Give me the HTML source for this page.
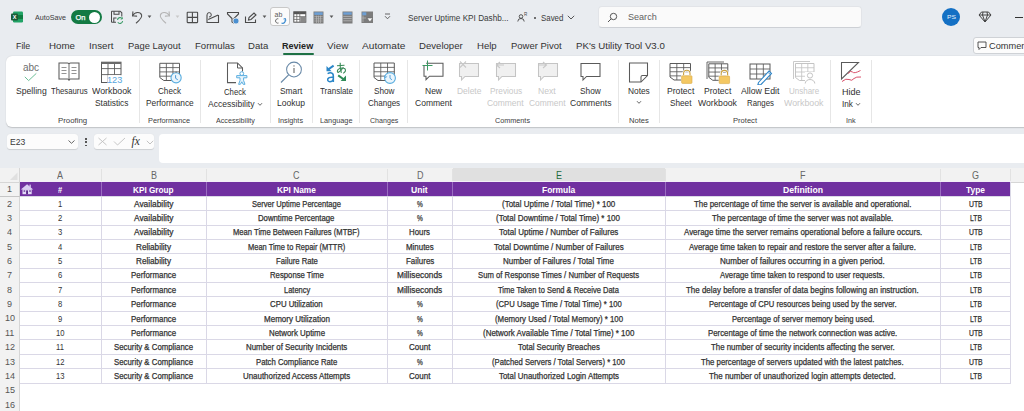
<!DOCTYPE html><html><head><meta charset="utf-8"><style>
*{box-sizing:border-box;margin:0;padding:0}
html,body{width:1024px;height:411px;overflow:hidden}
body{position:relative;background:#e9ecf0;font-family:"Liberation Sans",sans-serif;color:#242424}
.a{position:absolute;white-space:nowrap}
.t{position:absolute;white-space:nowrap;line-height:1}
.s{-webkit-text-stroke:0.25px currentColor}
.rl{position:absolute;white-space:nowrap;line-height:1;font-size:8.6px;color:#303030;text-align:center}
.gl{position:absolute;white-space:nowrap;line-height:1;font-size:8px;color:#3a3a3a;text-align:center}
.sep{position:absolute;top:60px;width:1px;height:63px;background:#e6e6e6}
.dis{color:#c2c2c2}
.cell{position:absolute;white-space:nowrap;line-height:1;font-size:8px;color:#2a2a2a;text-align:center}
.hd{position:absolute;white-space:nowrap;line-height:1;font-size:8.3px;color:#fff;font-weight:bold;text-align:center}
</style></head><body>
<svg class="a" style="left:10px;top:10px" width="14" height="14" viewBox="0 0 14 14">
<rect x="3" y="1.5" width="10" height="11" rx="1.2" fill="#21a366"/>
<rect x="3" y="5" width="10" height="4" fill="#107c41"/>
<rect x="1" y="3.5" width="7" height="7" rx="1" fill="#185c37"/>
<text x="4.5" y="9.2" font-size="5.5" font-family="Liberation Sans" font-weight="bold" fill="#fff" text-anchor="middle">X</text></svg>
<div class="t" style="left:35.00px;top:13.60px;font-size:7.5px;color:#3b3b3b;transform:scaleX(0.953);transform-origin:0 0;">AutoSave</div>
<div class="a" style="left:71px;top:10.3px;width:30.5px;height:13.6px;border-radius:7px;background:#137a43"></div>
<div class="a" style="left:89px;top:11.6px;width:11px;height:11px;border-radius:50%;background:#fff"></div>
<div class="t s" style="left:75.50px;top:14.00px;font-size:7.5px;color:#ffffff;transform:scaleX(1.000);transform-origin:0 0;">On</div>
<svg class="a" style="left:110px;top:10px" width="14" height="14" viewBox="0 0 14 14" fill="none" stroke="#4a4a4a" stroke-width="1.05">
<path d="M1.5 1.2 H10.2 L11.8 2.8 V6.5 M6 12.2 H1.5 Z" /><path d="M1.5 1.2 V12.2"/><path d="M4 1.2 V4.2 H9 V1.2"/><path d="M3.8 12.2 V8 H6.5"/>
<path d="M7.5 10 a2.6 2.6 0 0 1 4.8 -1.2" stroke="#3d9c68" stroke-width="1.1"/><path d="M12.6 11 a2.6 2.6 0 0 1 -4.8 1.2" stroke="#3d9c68" stroke-width="1.1"/>
<path d="M12.3 7.2 V9 H10.6" stroke="#3d9c68" stroke-width="0.9"/></svg>
<svg class="a" style="left:130px;top:9.5px" width="14" height="14" viewBox="0 0 14 14" fill="none" stroke="#4f4f4f" stroke-width="1.1" stroke-linecap="round">
<path d="M2.6 5.8 C5 1.5 10.5 1.6 11.6 5 C12.4 7.8 9.5 10.3 6.3 13"/><path d="M2.9 1.8 L2.6 5.8 L6.6 6.1"/></svg>
<svg class="a" style="left:147px;top:15.3px" width="5" height="4" viewBox="0 0 5 4"><path d="M0.6 0.6 L2.5 3 L4.4 0.6 Z" fill="#555"/></svg>
<svg class="a" style="left:158px;top:9.5px" width="14" height="14" viewBox="0 0 14 14" fill="none" stroke="#b4b4b4" stroke-width="1.1" stroke-linecap="round">
<path d="M11.4 5.8 C9 1.5 3.5 1.6 2.4 5 C1.6 7.8 4.5 10.3 7.7 13"/><path d="M11.1 1.8 L11.4 5.8 L7.4 6.1"/></svg>
<svg class="a" style="left:175px;top:15.3px" width="5" height="4" viewBox="0 0 5 4"><path d="M0.6 0.6 L2.5 3 L4.4 0.6 Z" fill="#c8c8c8"/></svg>
<svg class="a" style="left:185.5px;top:10.5px" width="13" height="13" viewBox="0 0 13 13" fill="none" stroke="#4a4a4a" stroke-width="1.1">
<rect x="1.2" y="1.2" width="10.4" height="10.4" rx="0.5"/><path d="M6.4 1.2 V11.6 M1.2 6.4 H11.6"/></svg>
<svg class="a" style="left:205px;top:10.5px" width="15" height="13" viewBox="0 0 15 13" fill="none" stroke="#4a4a4a" stroke-width="1.1">
<path d="M2 4 V11.5 H13.5 V4"/><path d="M3.2 8.5 L13.2 4"/><path d="M2 4 Q2 1.6 4.2 1.6 Q6.3 1.6 6.3 4 Q6.3 6 4 6" stroke-width="1"/></svg>
<svg class="a" style="left:225.5px;top:10.5px" width="14" height="14" viewBox="0 0 14 14" fill="none" stroke="#4a4a4a" stroke-width="1.1">
<path d="M1.5 1.5 H12.5 V3 L8 7.5 V12 L6 11 V7.5 L1.5 3 Z"/><circle cx="10" cy="10" r="3" fill="#4a8fd0" stroke="#e9ecf0" stroke-width="0.8"/></svg>
<svg class="a" style="left:244px;top:10.5px" width="14" height="13" viewBox="0 0 14 13" fill="none" stroke="#4a4a4a" stroke-width="1.1">
<path d="M1.5 5.5 V11.5 H11.5 V8.5"/><path d="M4.5 9 L5 6.5 L10 2 L12 4 L7 8.5 Z"/></svg>
<svg class="a" style="left:262px;top:15.3px" width="5" height="4" viewBox="0 0 5 4"><path d="M0.6 0.6 L2.5 3 L4.4 0.6 Z" fill="#555"/></svg>
<div class="a" style="left:270px;top:7px;width:19.5px;height:19px;border-radius:3px;background:#fbfbfb;border:1px solid #c8c8c8"></div>
<svg class="a" style="left:273px;top:9.5px" width="14" height="15" viewBox="0 0 14 15">
<text x="1.5" y="6.8" font-size="7" font-family="Liberation Sans" fill="#5a5a5a">ab</text>
<path d="M5.3 8.8 a2.2 2.2 0 1 0 0.2 4.2" fill="none" stroke="#5a5a5a" stroke-width="0.9"/>
<path d="M8.5 13 a2.6 2.6 0 0 0 3.5 -3.5" fill="none" stroke="#3a8ad0" stroke-width="1.2"/><path d="M10.5 9 L12.5 8.5 L12.8 10.8" fill="none" stroke="#3a8ad0" stroke-width="1"/></svg>
<svg class="a" style="left:293px;top:11px" width="14" height="12" viewBox="0 0 14 12">
<rect x="0.8" y="0.8" width="12" height="10.4" fill="#fff" stroke="#555" stroke-width="1"/><rect x="0.8" y="0.8" width="12" height="2.4" fill="#555"/>
<path d="M6.8 1 V11 M0.8 5.6 H12.8 M0.8 8.4 H6.8 M3.8 3 V11" stroke="#666" stroke-width="0.8"/><rect x="7.2" y="6" width="5.3" height="5" fill="#888"/></svg>
<svg class="a" style="left:312.5px;top:10.5px" width="11" height="13" viewBox="0 0 11 13">
<rect x="0.5" y="0.5" width="10" height="12" fill="#7c7c7c"/><rect x="1.3" y="1.3" width="8.4" height="2.6" fill="#6d9fd4"/>
<path d="M1.3 5.6 H9.7 M1.3 7.8 H9.7 M1.3 10 H9.7 M3.5 4.6 V12 M5.5 4.6 V12 M7.5 4.6 V12" stroke="#bdbdbd" stroke-width="0.6"/></svg>
<svg class="a" style="left:329px;top:15.3px" width="5" height="4" viewBox="0 0 5 4"><path d="M0.6 0.6 L2.5 3 L4.4 0.6 Z" fill="#555"/></svg>
<svg class="a" style="left:341.5px;top:10.5px" width="11" height="13" viewBox="0 0 11 13">
<rect x="0.5" y="0.5" width="10" height="12" fill="#7c7c7c"/><rect x="1.3" y="1.3" width="8.4" height="2.4" fill="#6d9fd4"/>
<path d="M1.3 5.4 H9.7 M1.3 7.6 H9.7 M1.3 9.8 H9.7" stroke="#c4c4c4" stroke-width="0.7"/></svg>
<svg class="a" style="left:360.5px;top:10.5px" width="13" height="13" viewBox="0 0 13 13">
<rect x="0.5" y="0.5" width="11.5" height="11.5" fill="#7c7c7c"/><rect x="1.3" y="1.3" width="4" height="3" fill="#6d9fd4"/>
<path d="M2 4.5 V11 M1.3 7 H5" stroke="#c4c4c4" stroke-width="0.6"/>
<path d="M6 7 L11.8 7 L8.9 11 Z" fill="#fff" stroke="#666" stroke-width="0.6"/></svg>
<svg class="a" style="left:383.5px;top:13px" width="7" height="7" viewBox="0 0 7 7" fill="none" stroke="#555" stroke-width="0.9">
<path d="M1 1 H6"/><path d="M1 3.2 L3.5 5.8 L6 3.2"/></svg>
<div class="t" style="left:407.80px;top:13.58px;font-size:8.5px;color:#3b3b3b;transform:scaleX(0.964);transform-origin:0 0;">Server Uptime KPI Dashb...</div>
<svg class="a" style="left:517px;top:12px" width="11" height="10" viewBox="0 0 11 10" fill="none" stroke="#444" stroke-width="0.9">
<circle cx="4" cy="4.5" r="1.8"/><path d="M0.8 9.5 a3.2 3 0 0 1 6.4 0"/><text x="7" y="4" font-size="4.5" font-family="Liberation Sans" fill="#444" stroke="none">R</text></svg>
<div class="a" style="left:533.8px;top:16.8px;width:2.2px;height:2.2px;border-radius:50%;background:#444"></div>
<div class="t" style="left:540.60px;top:13.58px;font-size:8.5px;color:#3b3b3b;transform:scaleX(0.929);transform-origin:0 0;">Saved</div>
<svg class="a" style="left:566.5px;top:15px" width="8" height="5" viewBox="0 0 8 5"><path d="M0.8 0.8 L4 4 L7.2 0.8" fill="none" stroke="#444" stroke-width="0.9"/></svg>
<div class="a" style="left:598.2px;top:6.4px;width:264px;height:22px;border-radius:4px;background:#fafafa;border:1px solid #e2e4e8;border-bottom-color:#cdd0d5"></div>
<svg class="a" style="left:607px;top:12px" width="11" height="11" viewBox="0 0 11 11" fill="none" stroke="#555" stroke-width="1">
<circle cx="6.5" cy="4.5" r="3.2"/><path d="M4.2 6.8 L1 10"/></svg>
<div class="t" style="left:627.70px;top:12.78px;font-size:8.5px;color:#616161;transform:scaleX(1.066);transform-origin:0 0;">Search</div>
<div class="a" style="left:942px;top:8px;width:18px;height:18px;border-radius:50%;background:#1470c4"></div>
<div class="t" style="left:946.50px;top:14.08px;font-size:6px;color:#e8f0fa;transform:scaleX(1.124);transform-origin:0 0;">PS</div>
<svg class="a" style="left:978px;top:10.5px" width="14" height="12" viewBox="0 0 14 12" fill="none" stroke="#444" stroke-width="1">
<path d="M3.5 1 H10.5 L13 4 L7 11 L1 4 Z M1 4 H13 M5 1 L4.5 4 L7 11 L9.5 4 L9 1"/></svg>
<div class="a" style="left:1015px;top:16.5px;width:8px;height:1px;background:#333"></div>
<div class="t" style="left:15.80px;top:41.06px;font-size:9.5px;color:#333333;transform:scaleX(0.928);transform-origin:0 0;">File</div>
<div class="t" style="left:48.60px;top:41.06px;font-size:9.5px;color:#333333;transform:scaleX(1.022);transform-origin:0 0;">Home</div>
<div class="t" style="left:88.60px;top:41.06px;font-size:9.5px;color:#333333;transform:scaleX(1.027);transform-origin:0 0;">Insert</div>
<div class="t" style="left:127.50px;top:41.06px;font-size:9.5px;color:#333333;transform:scaleX(0.984);transform-origin:0 0;">Page Layout</div>
<div class="t" style="left:194.50px;top:41.06px;font-size:9.5px;color:#333333;transform:scaleX(1.008);transform-origin:0 0;">Formulas</div>
<div class="t" style="left:248.40px;top:41.06px;font-size:9.5px;color:#333333;transform:scaleX(1.007);transform-origin:0 0;">Data</div>
<div class="t" style="left:282.40px;top:41.06px;font-size:9.5px;color:#242424;font-weight:bold;transform:scaleX(0.953);transform-origin:0 0;">Review</div>
<div class="t" style="left:327.00px;top:41.06px;font-size:9.5px;color:#333333;transform:scaleX(1.043);transform-origin:0 0;">View</div>
<div class="t" style="left:361.60px;top:41.06px;font-size:9.5px;color:#333333;transform:scaleX(1.067);transform-origin:0 0;">Automate</div>
<div class="t" style="left:418.60px;top:41.06px;font-size:9.5px;color:#333333;transform:scaleX(1.009);transform-origin:0 0;">Developer</div>
<div class="t" style="left:476.60px;top:41.06px;font-size:9.5px;color:#333333;transform:scaleX(1.008);transform-origin:0 0;">Help</div>
<div class="t" style="left:511.30px;top:41.06px;font-size:9.5px;color:#333333;transform:scaleX(0.998);transform-origin:0 0;">Power Pivot</div>
<div class="t" style="left:576.40px;top:41.06px;font-size:9.5px;color:#333333;transform:scaleX(1.019);transform-origin:0 0;">PK's Utility Tool V3.0</div>
<div class="a" style="left:282.5px;top:52.8px;width:31.5px;height:2px;border-radius:1px;background:#1e7145"></div>
<div class="a" style="left:972.7px;top:37px;width:60px;height:16.5px;border-radius:3px;background:#fcfcfc;border:1px solid #cfd2d6"></div>
<svg class="a" style="left:977px;top:40.5px" width="10" height="10" viewBox="0 0 10 10" fill="none" stroke="#444" stroke-width="0.9">
<path d="M1 1 H9 V6.5 H4 L2 8.5 V6.5 H1 Z"/></svg>
<div class="t" style="left:988.50px;top:40.56px;font-size:9.5px;color:#333333;transform:scaleX(0.973);transform-origin:0 0;">Commen</div>
<div class="a" style="left:6px;top:56.3px;width:1030px;height:70.7px;border-radius:6px;background:#ffffff;box-shadow:0 0.8px 1.2px rgba(0,0,0,0.18)"></div>
<div class="sep" style="left:138.5px"></div>
<div class="sep" style="left:199.8px"></div>
<div class="sep" style="left:269.5px"></div>
<div class="sep" style="left:311.8px"></div>
<div class="sep" style="left:359.3px"></div>
<div class="sep" style="left:407px"></div>
<div class="sep" style="left:617.8px"></div>
<div class="sep" style="left:659px"></div>
<div class="sep" style="left:829.7px"></div>
<div class="sep" style="left:870.5px"></div>
<svg class="a" style="left:20px;top:60px" width="22" height="24" viewBox="0 0 22 24" fill="none"><text x="11" y="11.2" font-size="10" font-family="Liberation Sans" fill="#6e6e6e" text-anchor="middle">abc</text><path d="M4.8 16.8 L8.6 20.6 L16.3 13.4" stroke="#6cbf97" stroke-width="1"/></svg>
<div class="t" style="left:15.60px;top:86.62px;font-size:9.0px;color:#303030;transform:scaleX(0.959);transform-origin:0 0;">Spelling</div>
<svg class="a" style="left:57px;top:61px" width="25" height="22" viewBox="0 0 25 22" fill="none"><path d="M2 2 H10.5 Q12 2 12 3.5 Q12 2 13.5 2 H22 V18 H13.5 Q12 18 12 19.5 Q12 18 10.5 18 H2 Z" stroke="#5a5a5a" stroke-width="1.05" fill="#fff"/><path d="M12 3.5 V19.5" stroke="#5a5a5a" stroke-width="0.9"/><path d="M4.5 6.5 H9.5 M4.5 9.5 H9.5 M4.5 12.5 H9.5 M14.5 6.5 H19.5 M14.5 9.5 H19.5 M14.5 12.5 H19.5" stroke="#888" stroke-width="0.9"/></svg>
<div class="t" style="left:51.00px;top:86.62px;font-size:9.0px;color:#303030;transform:scaleX(0.861);transform-origin:0 0;">Thesaurus</div>
<svg class="a" style="left:100px;top:60px" width="24" height="25" viewBox="0 0 24 25" fill="none"><rect x="1.5" y="2.2" width="19.5" height="20.3" fill="#fff" stroke="#5a5a5a" stroke-width="1"/><rect x="1.5" y="2" width="19.5" height="2" fill="#6a6a6a"/><path d="M1.5 8.6 H21 M1.5 14.6 H21 M8 4 V22.5 M14.5 4 V14.6" stroke="#5a5a5a" stroke-width="0.9"/><rect x="7.6" y="15.2" width="16" height="9.5" fill="#fff"/><text x="14.6" y="22.6" font-size="9.2" font-family="Liberation Sans" fill="#58a6dc" text-anchor="middle">123</text></svg>
<div class="t" style="left:91.90px;top:86.62px;font-size:9.0px;color:#303030;transform:scaleX(0.979);transform-origin:0 0;">Workbook</div>
<div class="t" style="left:95.00px;top:98.52px;font-size:9.0px;color:#303030;transform:scaleX(0.930);transform-origin:0 0;">Statistics</div>
<div class="t" style="left:58.40px;top:116.74px;font-size:8.0px;color:#404040;transform:scaleX(0.980);transform-origin:0 0;">Proofing</div>
<svg class="a" style="left:158px;top:61px" width="26" height="25" viewBox="0 0 26 25" fill="none"><path d="M1.8 2.3 H21.5 V19.5 H5.8 L1.8 16.5 Z" fill="#fff" stroke="#5a5a5a" stroke-width="1.0"/><path d="M8.37 2.3 V19.5" stroke="#5a5a5a" stroke-width="0.85"/><path d="M14.93 2.3 V19.5" stroke="#5a5a5a" stroke-width="0.85"/><path d="M1.8 6.60 H21.5" stroke="#5a5a5a" stroke-width="0.85"/><path d="M1.8 10.90 H21.5" stroke="#5a5a5a" stroke-width="0.85"/><path d="M1.8 15.20 H21.5" stroke="#5a5a5a" stroke-width="0.85"/><circle cx="18.1" cy="16.8" r="5.1" fill="#eaf5fc" stroke="#5aaee0" stroke-width="1.1"/><path d="M17.6 14.2 V17.3 L19.8 18.8" stroke="#4a9ad8" stroke-width="1"/><path d="M18.1 11.7 V10.6" stroke="#555" stroke-width="1"/></svg>
<div class="t" style="left:158.00px;top:86.62px;font-size:9.0px;color:#303030;transform:scaleX(0.902);transform-origin:0 0;">Check</div>
<div class="t" style="left:145.60px;top:98.52px;font-size:9.0px;color:#303030;transform:scaleX(0.926);transform-origin:0 0;">Performance</div>
<div class="t" style="left:148.00px;top:116.74px;font-size:8.0px;color:#404040;transform:scaleX(0.917);transform-origin:0 0;">Performance</div>
<svg class="a" style="left:225px;top:60.6px" width="26" height="25" viewBox="0 0 26 25" fill="none"><path d="M2.5 2 H12.5 L17.5 7 V21.6 H2.5 Z" fill="#fff" stroke="#5a5a5a" stroke-width="1.05"/><path d="M12.5 2 V7 H17.5" stroke="#5a5a5a" stroke-width="1"/><rect x="11" y="10.5" width="13" height="14" fill="#fff"/><circle cx="16.8" cy="12.6" r="1.9" fill="#fff" stroke="#5aaee0" stroke-width="1"/><path d="M11.7 14.6 H21.9 V16.8 H18.6 V19.6 L20 23.3 H18.2 L16.8 20.8 L15.4 23.3 H13.6 L15 19.6 V16.8 H11.7 Z" fill="#e8f4fb" stroke="#5aaee0" stroke-width="1"/></svg>
<div class="t" style="left:224.40px;top:88.42px;font-size:9.0px;color:#303030;transform:scaleX(0.862);transform-origin:0 0;">Check</div>
<div class="t" style="left:208.00px;top:99.92px;font-size:9.0px;color:#303030;transform:scaleX(0.949);transform-origin:0 0;">Accessibility</div>
<svg class="a" style="left:256.5px;top:101.5px" width="6" height="5" viewBox="0 0 6 5" fill="none"><path d="M1 1.2 L3 3.3 L5 1.2" stroke="#555" stroke-width="0.9"/></svg>
<div class="t" style="left:215.70px;top:116.74px;font-size:8.0px;color:#404040;transform:scaleX(0.893);transform-origin:0 0;">Accessibility</div>
<svg class="a" style="left:279px;top:60px" width="25" height="25" viewBox="0 0 25 25" fill="none"><circle cx="15" cy="9.5" r="7.4" stroke="#6a8aa8" stroke-width="1.05"/><path d="M9.6 14.8 L2 22.5" stroke="#6a8aa8" stroke-width="1.2"/><path d="M15 8 V13" stroke="#666" stroke-width="1.1"/><circle cx="15" cy="5.9" r="0.7" fill="#666"/></svg>
<div class="t" style="left:279.50px;top:86.62px;font-size:9.0px;color:#303030;transform:scaleX(0.929);transform-origin:0 0;">Smart</div>
<div class="t" style="left:277.00px;top:98.52px;font-size:9.0px;color:#303030;transform:scaleX(0.948);transform-origin:0 0;">Lookup</div>
<div class="t" style="left:278.00px;top:116.74px;font-size:8.0px;color:#404040;transform:scaleX(0.907);transform-origin:0 0;">Insights</div>
<svg class="a" style="left:324px;top:61px" width="25" height="22" viewBox="0 0 25 22" fill="none"><path d="M9.6 4.6 L4.5 8.3" stroke="#2a86c8" stroke-width="2"/><path d="M2.5 5 L2.5 10.2 L7.6 10.2 Z" fill="#2a86c8"/><path d="M3.6 12.6 Q6.5 11 8.6 12.6 Q9.3 13.3 9.3 15 V21" stroke="#2a86c8" stroke-width="1.6" fill="none"/><path d="M9.3 16.2 Q4.8 15.8 3.8 17.8 Q3.2 20.6 5.9 20.7 Q8.5 20.7 9.3 18.5" stroke="#2a86c8" stroke-width="1.5" fill="none"/><path d="M13 4.8 L20.5 4.2" stroke="#3a8a58" stroke-width="1.1"/><path d="M16.2 1.8 Q15.8 7 17.4 11.8" stroke="#3a8a58" stroke-width="1.1"/><path d="M19.5 6.2 Q16.5 10.5 14.2 11.5 Q12.5 10.5 14.2 8.4 Q17.5 6.2 20.8 7.6 Q22.8 10 19.2 12.4" stroke="#3a8a58" stroke-width="1.1" fill="none"/><path d="M14.2 14.4 L19.6 18.3" stroke="#2e8b57" stroke-width="2"/><path d="M22 14.5 L22 20 L16.6 20 Z" fill="#2e8b57"/></svg>
<div class="t" style="left:320.00px;top:86.62px;font-size:9.0px;color:#303030;transform:scaleX(0.888);transform-origin:0 0;">Translate</div>
<div class="t" style="left:320.00px;top:116.74px;font-size:8.0px;color:#404040;transform:scaleX(0.913);transform-origin:0 0;">Language</div>
<svg class="a" style="left:372px;top:61px" width="26" height="25" viewBox="0 0 26 25" fill="none"><path d="M2 2 H22.3 V19.5 H6 L2 16.5 Z" fill="#fff" stroke="#5a5a5a" stroke-width="1.0"/><path d="M8.77 2 V19.5" stroke="#5a5a5a" stroke-width="0.85"/><path d="M15.53 2 V19.5" stroke="#5a5a5a" stroke-width="0.85"/><path d="M2 6.38 H22.3" stroke="#5a5a5a" stroke-width="0.85"/><path d="M2 10.75 H22.3" stroke="#5a5a5a" stroke-width="0.85"/><path d="M2 15.12 H22.3" stroke="#5a5a5a" stroke-width="0.85"/><circle cx="18" cy="17" r="5.4" fill="#eaf5fc" stroke="#5aaee0" stroke-width="1.1"/><path d="M18 14 V17.3 L20 18.8" stroke="#4a9ad8" stroke-width="0.9"/><path d="M12.3 14.6 L13.3 16.6 L15.2 15.4" stroke="#4a9ad8" stroke-width="0.8"/></svg>
<div class="t" style="left:373.50px;top:86.62px;font-size:9.0px;color:#303030;transform:scaleX(0.911);transform-origin:0 0;">Show</div>
<div class="t" style="left:367.60px;top:98.52px;font-size:9.0px;color:#303030;transform:scaleX(0.891);transform-origin:0 0;">Changes</div>
<div class="t" style="left:369.60px;top:116.74px;font-size:8.0px;color:#404040;transform:scaleX(0.887);transform-origin:0 0;">Changes</div>
<svg class="a" style="left:421px;top:60px" width="24" height="23" viewBox="0 0 24 23" fill="none"><path d="M3 3.2 H22 V16.2 H8.5 L5 19.7 V16.2 H3 Z" fill="#fff" stroke="#5a5a5a" stroke-width="1.05"/><rect x="1.2" y="1.2" width="4" height="4" fill="#fff"/><path d="M6.5 0.5 V10.5 M1.5 5.5 H11.5" stroke="#3c9a64" stroke-width="1"/></svg>
<div class="t" style="left:425.00px;top:86.62px;font-size:9.0px;color:#303030;transform:scaleX(0.944);transform-origin:0 0;">New</div>
<div class="t" style="left:414.60px;top:98.52px;font-size:9.0px;color:#303030;transform:scaleX(0.948);transform-origin:0 0;">Comment</div>
<svg class="a" style="left:457px;top:61px" width="24" height="22" viewBox="0 0 24 22" fill="none"><path d="M2.5 2.5 H21.5 V15.5 H8.0 L4.5 19.0 V15.5 H2.5 Z" fill="#f0f0f0" stroke="#c4c4c4" stroke-width="1.05"/><path d="M3 0.5 L9 6.5 M9 0.5 L3 6.5" stroke="#c8c8c8" stroke-width="1.1"/></svg>
<div class="t" style="left:457.40px;top:86.62px;font-size:9.0px;color:#c8c8c8;transform:scaleX(0.938);transform-origin:0 0;">Delete</div>
<svg class="a" style="left:494px;top:61px" width="24" height="22" viewBox="0 0 24 22" fill="none"><path d="M2.5 2.5 H21.5 V15.5 H8.0 L4.5 19.0 V15.5 H2.5 Z" fill="#f0f0f0" stroke="#c4c4c4" stroke-width="1.05"/><path d="M6 1 L2.5 4 L6 7 M2.5 4 H10" stroke="#c8c8c8" stroke-width="1.1"/></svg>
<div class="t" style="left:489.50px;top:86.62px;font-size:9.0px;color:#c8c8c8;transform:scaleX(0.920);transform-origin:0 0;">Previous</div>
<div class="t" style="left:487.00px;top:98.52px;font-size:9.0px;color:#c8c8c8;transform:scaleX(0.938);transform-origin:0 0;">Comment</div>
<svg class="a" style="left:536px;top:61px" width="24" height="22" viewBox="0 0 24 22" fill="none"><path d="M2.5 2.5 H21.5 V15.5 H8.0 L4.5 19.0 V15.5 H2.5 Z" fill="#f0f0f0" stroke="#c4c4c4" stroke-width="1.05"/><path d="M7 1 L10.5 4 L7 7 M3 4 H10.5" stroke="#c8c8c8" stroke-width="1.1"/></svg>
<div class="t" style="left:538.00px;top:86.62px;font-size:9.0px;color:#c8c8c8;transform:scaleX(0.956);transform-origin:0 0;">Next</div>
<div class="t" style="left:528.50px;top:98.52px;font-size:9.0px;color:#c8c8c8;transform:scaleX(0.936);transform-origin:0 0;">Comment</div>
<svg class="a" style="left:579px;top:61px" width="24" height="22" viewBox="0 0 24 22" fill="none"><path d="M2 2.5 H21 V15.5 H7.5 L4 19.0 V15.5 H2 Z" fill="#fff" stroke="#5a5a5a" stroke-width="1.05"/></svg>
<div class="t" style="left:580.00px;top:86.62px;font-size:9.0px;color:#303030;transform:scaleX(0.924);transform-origin:0 0;">Show</div>
<div class="t" style="left:569.60px;top:98.52px;font-size:9.0px;color:#303030;transform:scaleX(0.952);transform-origin:0 0;">Comments</div>
<div class="t" style="left:495.00px;top:116.74px;font-size:8.0px;color:#404040;transform:scaleX(0.905);transform-origin:0 0;">Comments</div>
<svg class="a" style="left:627px;top:61px" width="24" height="23" viewBox="0 0 24 23" fill="none"><path d="M2.5 2 H20.5 V14.5 L14 21 H2.5 Z" fill="#fff" stroke="#5a5a5a" stroke-width="1.05"/><path d="M20.5 14.5 H15.5 Q14 14.5 14 16 V21" stroke="#5a5a5a" stroke-width="1.05"/></svg>
<div class="t" style="left:627.60px;top:86.62px;font-size:9.0px;color:#303030;transform:scaleX(0.927);transform-origin:0 0;">Notes</div>
<svg class="a" style="left:635.5px;top:99.5px" width="6" height="5" viewBox="0 0 6 5" fill="none"><path d="M1 1.2 L3 3.3 L5 1.2" stroke="#555" stroke-width="0.9"/></svg>
<div class="t" style="left:628.60px;top:116.74px;font-size:8.0px;color:#404040;transform:scaleX(0.952);transform-origin:0 0;">Notes</div>
<svg class="a" style="left:668px;top:61px" width="26" height="24" viewBox="0 0 26 24" fill="none"><path d="M2 2.5 H22.5 V19.0 H6 L2 16.0 Z" fill="#fff" stroke="#5a5a5a" stroke-width="1.0"/><path d="M8.83 2.5 V19.0" stroke="#5a5a5a" stroke-width="0.85"/><path d="M15.67 2.5 V19.0" stroke="#5a5a5a" stroke-width="0.85"/><path d="M2 6.62 H22.5" stroke="#5a5a5a" stroke-width="0.85"/><path d="M2 10.75 H22.5" stroke="#5a5a5a" stroke-width="0.85"/><path d="M2 14.88 H22.5" stroke="#5a5a5a" stroke-width="0.85"/><path d="M15.6 15 V12.4 a3.2 3.2 0 0 1 6.4 0 V15" stroke="#fff" stroke-width="2.6"/><path d="M15.6 15 V12.4 a3.2 3.2 0 0 1 6.4 0 V15" stroke="#c9a040" stroke-width="1.1"/><rect x="13.1" y="14.2" width="11.4" height="8.6" fill="#fff"/><rect x="13.6" y="14.8" width="10.4" height="7.6" rx="0.8" fill="#f4c863" stroke="#d9aa45" stroke-width="0.6"/></svg>
<div class="t" style="left:666.50px;top:86.62px;font-size:9.0px;color:#303030;transform:scaleX(0.957);transform-origin:0 0;">Protect</div>
<div class="t" style="left:669.50px;top:98.52px;font-size:9.0px;color:#303030;transform:scaleX(0.910);transform-origin:0 0;">Sheet</div>
<svg class="a" style="left:705px;top:60px" width="26" height="25" viewBox="0 0 26 25" fill="none"><path d="M2 19 V2 H19" stroke="#5a5a5a" stroke-width="0.9"/><path d="M3.8 3.8 H22.8 V20.3 H7.8 L3.8 17.3 Z" fill="#fff" stroke="#5a5a5a" stroke-width="1.0"/><path d="M10.13 3.8 V20.3" stroke="#5a5a5a" stroke-width="0.85"/><path d="M16.47 3.8 V20.3" stroke="#5a5a5a" stroke-width="0.85"/><path d="M3.8 7.92 H22.8" stroke="#5a5a5a" stroke-width="0.85"/><path d="M3.8 12.05 H22.8" stroke="#5a5a5a" stroke-width="0.85"/><path d="M3.8 16.18 H22.8" stroke="#5a5a5a" stroke-width="0.85"/><path d="M16.2 16.2 V13.6 a3.2 3.2 0 0 1 6.4 0 V16.2" stroke="#fff" stroke-width="2.6"/><path d="M16.2 16.2 V13.6 a3.2 3.2 0 0 1 6.4 0 V16.2" stroke="#c9a040" stroke-width="1.1"/><rect x="13.7" y="15.399999999999999" width="11.4" height="8.6" fill="#fff"/><rect x="14.2" y="16.0" width="10.4" height="7.6" rx="0.8" fill="#f4c863" stroke="#d9aa45" stroke-width="0.6"/></svg>
<div class="t" style="left:703.50px;top:86.62px;font-size:9.0px;color:#303030;transform:scaleX(0.957);transform-origin:0 0;">Protect</div>
<div class="t" style="left:697.70px;top:98.52px;font-size:9.0px;color:#303030;transform:scaleX(0.964);transform-origin:0 0;">Workbook</div>
<svg class="a" style="left:748px;top:61px" width="26" height="24" viewBox="0 0 26 24" fill="none"><rect x="2" y="3" width="20" height="15" fill="#fff" stroke="#5a5a5a" stroke-width="1.0"/><path d="M8.67 3 V18" stroke="#5a5a5a" stroke-width="0.85"/><path d="M15.33 3 V18" stroke="#5a5a5a" stroke-width="0.85"/><path d="M2 8.00 H22" stroke="#5a5a5a" stroke-width="0.85"/><path d="M2 13.00 H22" stroke="#5a5a5a" stroke-width="0.85"/><path d="M10.5 21.5 L21 10 L23.5 12.5 L13 23.5 L9.8 24 Z" fill="#fff" stroke="#2f86c8" stroke-width="1.1"/><path d="M20 11.3 L22.3 13.6" stroke="#2f86c8" stroke-width="0.9"/></svg>
<div class="t" style="left:741.00px;top:86.62px;font-size:9.0px;color:#303030;transform:scaleX(0.972);transform-origin:0 0;">Allow Edit</div>
<div class="t" style="left:747.00px;top:98.52px;font-size:9.0px;color:#303030;transform:scaleX(0.870);transform-origin:0 0;">Ranges</div>
<svg class="a" style="left:792px;top:60px" width="25" height="25" viewBox="0 0 25 25" fill="none"><path d="M1.5 19 V1.5 H18" stroke="#c4c4c4" stroke-width="0.9"/><path d="M3.5 3.5 H22.0 V20.5 H7.5 L3.5 17.5 Z" fill="#fff" stroke="#c4c4c4" stroke-width="1.0"/><path d="M9.67 3.5 V20.5" stroke="#c4c4c4" stroke-width="0.85"/><path d="M15.83 3.5 V20.5" stroke="#c4c4c4" stroke-width="0.85"/><path d="M3.5 7.75 H22.0" stroke="#c4c4c4" stroke-width="0.85"/><path d="M3.5 12.00 H22.0" stroke="#c4c4c4" stroke-width="0.85"/><path d="M3.5 16.25 H22.0" stroke="#c4c4c4" stroke-width="0.85"/><rect x="13" y="12" width="12" height="13" fill="#fff"/><circle cx="18" cy="15.5" r="2.6" stroke="#c4c4c4" stroke-width="1"/><path d="M13.2 23.5 a4.8 4 0 0 1 9.6 0" stroke="#c4c4c4" stroke-width="1"/></svg>
<div class="t" style="left:788.50px;top:86.62px;font-size:9.0px;color:#c8c8c8;transform:scaleX(0.888);transform-origin:0 0;">Unshare</div>
<div class="t" style="left:784.00px;top:98.52px;font-size:9.0px;color:#c8c8c8;transform:scaleX(0.979);transform-origin:0 0;">Workbook</div>
<div class="t" style="left:732.70px;top:116.74px;font-size:8.0px;color:#404040;transform:scaleX(0.947);transform-origin:0 0;">Protect</div>
<svg class="a" style="left:840px;top:61px" width="23" height="23" viewBox="0 0 23 23" fill="none"><path d="M1.5 1.5 H18.5 L1.5 18 Z" fill="#fff" stroke="#5a5a5a" stroke-width="1.05"/><path d="M8 12.5 Q11 9 12.5 11 Q14 13 20.5 9.5" stroke="#d9506a" stroke-width="1"/><path d="M2 20.5 Q6 17 9 18.5 Q12 20.5 14 17.5 Q16 15.5 21 16" stroke="#d9506a" stroke-width="1"/></svg>
<div class="t" style="left:842.00px;top:88.42px;font-size:9.0px;color:#303030;transform:scaleX(0.999);transform-origin:0 0;">Hide</div>
<div class="t" style="left:841.60px;top:99.92px;font-size:9.0px;color:#303030;transform:scaleX(0.908);transform-origin:0 0;">Ink</div>
<svg class="a" style="left:854.5px;top:101.5px" width="6" height="5" viewBox="0 0 6 5" fill="none"><path d="M1 1.2 L3 3.3 L5 1.2" stroke="#555" stroke-width="0.9"/></svg>
<div class="t" style="left:846.00px;top:116.74px;font-size:8.0px;color:#404040;transform:scaleX(0.900);transform-origin:0 0;">Ink</div>
<div class="a" style="left:6.8px;top:134.3px;width:71.2px;height:14.8px;border-radius:3px;background:#fcfcfc;box-shadow:0 0.6px 0.8px rgba(0,0,0,0.12)"></div>
<div class="t" style="left:9.90px;top:136.66px;font-size:9.5px;color:#3a3a3a;transform:scaleX(0.905);transform-origin:0 0;">E23</div>
<svg class="a" style="left:67px;top:139px" width="9" height="6" viewBox="0 0 9 6"><path d="M1.5 1.5 L4.5 4.3 L7.5 1.5" fill="none" stroke="#555" stroke-width="0.9"/></svg>
<div class="a" style="left:85.2px;top:137.8px;width:1.8px;height:1.8px;background:#555"></div>
<div class="a" style="left:85.2px;top:141.2px;width:1.8px;height:1.8px;background:#555"></div>
<div class="a" style="left:85.2px;top:144.6px;width:1.8px;height:1.8px;background:#555"></div>
<div class="a" style="left:94.2px;top:133.8px;width:59.6px;height:15.2px;border-radius:3px;background:#fcfcfc;box-shadow:0 0.6px 0.8px rgba(0,0,0,0.12)"></div>
<svg class="a" style="left:97px;top:137px" width="11" height="9" viewBox="0 0 11 9"><path d="M1.5 1 L9.5 8 M9.5 1 L1.5 8" stroke="#c0c0c0" stroke-width="0.9"/></svg>
<svg class="a" style="left:113px;top:137px" width="13" height="9" viewBox="0 0 13 9"><path d="M1 4.5 L4.5 8 L12 1" fill="none" stroke="#c0c0c0" stroke-width="0.9"/></svg>
<div class="t" style="left:131.5px;top:136px;font-family:'Liberation Serif',serif;font-style:italic;font-size:11.5px;color:#333">fx</div>
<svg class="a" style="left:145.5px;top:139.5px" width="8" height="5" viewBox="0 0 8 5"><path d="M0.8 0.8 L4 4 L7.2 0.8" fill="none" stroke="#bbb" stroke-width="0.9"/></svg>
<div class="a" style="left:158.8px;top:133.8px;width:870px;height:29px;border-radius:4px;background:#ffffff"></div>
<div class="a" style="left:0;top:167.5px;width:1024px;height:243.5px;background:#fff"></div>
<div class="a" style="left:0;top:167.5px;width:1024px;height:14.5px;background:#f2f2f2"></div>
<div class="a" style="left:0;top:167.5px;width:19.5px;height:243.5px;background:#f2f2f2"></div>
<div class="a" style="left:452.5px;top:168.0px;width:212.79999999999995px;height:14.0px;background:#e0e0e0;border-bottom:1.2px solid #22664a"></div>
<div class="a" style="left:19.0px;top:168.5px;width:1px;height:13.5px;background:#e2e2e2"></div>
<div class="a" style="left:100.5px;top:168.5px;width:1px;height:13.5px;background:#e2e2e2"></div>
<div class="a" style="left:205.5px;top:168.5px;width:1px;height:13.5px;background:#e2e2e2"></div>
<div class="a" style="left:386.5px;top:168.5px;width:1px;height:13.5px;background:#e2e2e2"></div>
<div class="a" style="left:452.0px;top:168.5px;width:1px;height:13.5px;background:#e2e2e2"></div>
<div class="a" style="left:664.8px;top:168.5px;width:1px;height:13.5px;background:#e2e2e2"></div>
<div class="a" style="left:939.9px;top:168.5px;width:1px;height:13.5px;background:#e2e2e2"></div>
<div class="a" style="left:1010.0px;top:168.5px;width:1px;height:13.5px;background:#e2e2e2"></div>
<div class="a" style="left:0;top:181.5px;width:452.5px;height:1px;background:#d6d6d6"></div>
<div class="a" style="left:665.3px;top:181.5px;width:358.70000000000005px;height:1px;background:#d6d6d6"></div>
<div class="a" style="left:19.0px;top:167.5px;width:1px;height:243.5px;background:#d6d6d6"></div>
<svg class="a" style="left:0;top:167.5px" width="19" height="14"><path d="M17.5 4.5 L17.5 12 L10 12 Z" fill="#e0e0e0"/></svg>
<div class="t" style="left:57.25px;top:170.90px;font-size:10px;color:#666666;transform:scaleX(0.900);transform-origin:0 0;">A</div>
<div class="t" style="left:150.50px;top:170.90px;font-size:10px;color:#666666;transform:scaleX(0.900);transform-origin:0 0;">B</div>
<div class="t" style="left:293.25px;top:170.90px;font-size:10px;color:#666666;transform:scaleX(0.900);transform-origin:0 0;">C</div>
<div class="t" style="left:416.50px;top:170.90px;font-size:10px;color:#666666;transform:scaleX(0.900);transform-origin:0 0;">D</div>
<div class="t" style="left:555.90px;top:170.90px;font-size:10px;color:#1e6b3e;transform:scaleX(0.900);transform-origin:0 0;">E</div>
<div class="t" style="left:800.10px;top:170.90px;font-size:10px;color:#666666;transform:scaleX(0.900);transform-origin:0 0;">F</div>
<div class="t" style="left:971.95px;top:170.90px;font-size:10px;color:#666666;transform:scaleX(0.900);transform-origin:0 0;">G</div>
<div class="t" style="left:7.09px;top:185.24px;font-size:9.3px;color:#555555;transform:scaleX(0.970);transform-origin:0 0;">1</div>
<div class="t" style="left:7.09px;top:199.60px;font-size:9.3px;color:#555555;transform:scaleX(0.970);transform-origin:0 0;">2</div>
<div class="t" style="left:7.09px;top:213.96px;font-size:9.3px;color:#555555;transform:scaleX(0.970);transform-origin:0 0;">3</div>
<div class="t" style="left:7.09px;top:228.32px;font-size:9.3px;color:#555555;transform:scaleX(0.970);transform-origin:0 0;">4</div>
<div class="t" style="left:7.09px;top:242.68px;font-size:9.3px;color:#555555;transform:scaleX(0.970);transform-origin:0 0;">5</div>
<div class="t" style="left:7.09px;top:257.04px;font-size:9.3px;color:#555555;transform:scaleX(0.970);transform-origin:0 0;">6</div>
<div class="t" style="left:7.09px;top:271.40px;font-size:9.3px;color:#555555;transform:scaleX(0.970);transform-origin:0 0;">7</div>
<div class="t" style="left:7.09px;top:285.76px;font-size:9.3px;color:#555555;transform:scaleX(0.970);transform-origin:0 0;">8</div>
<div class="t" style="left:7.09px;top:300.12px;font-size:9.3px;color:#555555;transform:scaleX(0.970);transform-origin:0 0;">9</div>
<div class="t" style="left:4.58px;top:314.48px;font-size:9.3px;color:#555555;transform:scaleX(0.970);transform-origin:0 0;">10</div>
<div class="t" style="left:4.92px;top:328.84px;font-size:9.3px;color:#555555;transform:scaleX(0.970);transform-origin:0 0;">11</div>
<div class="t" style="left:4.58px;top:343.20px;font-size:9.3px;color:#555555;transform:scaleX(0.970);transform-origin:0 0;">12</div>
<div class="t" style="left:4.58px;top:357.56px;font-size:9.3px;color:#555555;transform:scaleX(0.970);transform-origin:0 0;">13</div>
<div class="t" style="left:4.58px;top:371.92px;font-size:9.3px;color:#555555;transform:scaleX(0.970);transform-origin:0 0;">14</div>
<div class="t" style="left:4.58px;top:386.28px;font-size:9.3px;color:#555555;transform:scaleX(0.970);transform-origin:0 0;">15</div>
<div class="t" style="left:4.58px;top:400.64px;font-size:9.3px;color:#555555;transform:scaleX(0.970);transform-origin:0 0;">16</div>
<div class="t" style="left:4.58px;top:415.00px;font-size:9.3px;color:#555555;transform:scaleX(0.970);transform-origin:0 0;">17</div>
<div class="a" style="left:0;top:195.76000000000002px;width:19.5px;height:1px;background:#c6c6c6"></div>
<div class="a" style="left:19.5px;top:181.0px;width:991.0px;height:1px;background:#f3eef8"></div>
<div class="a" style="left:19.5px;top:182.0px;width:991.0px;height:14.36px;background:#7030a0"></div>
<div class="a" style="left:19.5px;top:195.86px;width:991.0px;height:1px;background:#dad8e6"></div>
<div class="a" style="left:19.5px;top:210.22px;width:991.0px;height:1px;background:#dad8e6"></div>
<div class="a" style="left:19.5px;top:224.57999999999998px;width:991.0px;height:1px;background:#dad8e6"></div>
<div class="a" style="left:19.5px;top:238.94px;width:991.0px;height:1px;background:#dad8e6"></div>
<div class="a" style="left:19.5px;top:253.3px;width:991.0px;height:1px;background:#dad8e6"></div>
<div class="a" style="left:19.5px;top:267.65999999999997px;width:991.0px;height:1px;background:#dad8e6"></div>
<div class="a" style="left:19.5px;top:282.02px;width:991.0px;height:1px;background:#dad8e6"></div>
<div class="a" style="left:19.5px;top:296.38px;width:991.0px;height:1px;background:#dad8e6"></div>
<div class="a" style="left:19.5px;top:310.74px;width:991.0px;height:1px;background:#dad8e6"></div>
<div class="a" style="left:19.5px;top:325.1px;width:991.0px;height:1px;background:#dad8e6"></div>
<div class="a" style="left:19.5px;top:339.46px;width:991.0px;height:1px;background:#dad8e6"></div>
<div class="a" style="left:19.5px;top:353.82px;width:991.0px;height:1px;background:#dad8e6"></div>
<div class="a" style="left:19.5px;top:368.18px;width:991.0px;height:1px;background:#dad8e6"></div>
<div class="a" style="left:19.5px;top:382.53999999999996px;width:991.0px;height:1px;background:#dad8e6"></div>
<div class="a" style="left:100.5px;top:182.0px;width:1px;height:201.03999999999996px;background:#dad8e6"></div>
<div class="a" style="left:205.5px;top:182.0px;width:1px;height:201.03999999999996px;background:#dad8e6"></div>
<div class="a" style="left:386.5px;top:182.0px;width:1px;height:201.03999999999996px;background:#dad8e6"></div>
<div class="a" style="left:452.0px;top:182.0px;width:1px;height:201.03999999999996px;background:#dad8e6"></div>
<div class="a" style="left:664.8px;top:182.0px;width:1px;height:201.03999999999996px;background:#dad8e6"></div>
<div class="a" style="left:939.9px;top:182.0px;width:1px;height:201.03999999999996px;background:#dad8e6"></div>
<div class="a" style="left:1010.0px;top:182.0px;width:1px;height:201.03999999999996px;background:#dad8e6"></div>
<div class="a" style="left:100.5px;top:182.0px;width:1px;height:14.36px;background:#9a6cc0"></div>
<div class="a" style="left:205.5px;top:182.0px;width:1px;height:14.36px;background:#9a6cc0"></div>
<div class="a" style="left:386.5px;top:182.0px;width:1px;height:14.36px;background:#9a6cc0"></div>
<div class="a" style="left:452.0px;top:182.0px;width:1px;height:14.36px;background:#9a6cc0"></div>
<div class="a" style="left:664.8px;top:182.0px;width:1px;height:14.36px;background:#9a6cc0"></div>
<div class="a" style="left:939.9px;top:182.0px;width:1px;height:14.36px;background:#9a6cc0"></div>
<svg class="a" style="left:19.5px;top:182.0px" width="15" height="14" viewBox="0 0 15 14">
<path d="M0.8 7.6 L7.1 2.2 L13.2 7.6 Z" fill="#d9cdf2"/><rect x="9.5" y="2.6" width="1.3" height="3" fill="#d9cdf2"/>
<rect x="2.5" y="7.2" width="9.2" height="5" fill="#e3daf6"/>
<rect x="6.1" y="8.4" width="1.9" height="3.8" fill="#5b2a8a"/>
<rect x="3.6" y="8.3" width="1.6" height="1.5" fill="#6a3a9a"/><rect x="9.2" y="8.3" width="1.6" height="1.5" fill="#6a3a9a"/>
</svg>
<div class="t" style="left:58.17px;top:185.76px;font-size:8.3px;color:#ffffff;font-weight:bold;transform:scaleX(0.900);transform-origin:0 0;">#</div>
<div class="t" style="left:133.20px;top:185.76px;font-size:8.3px;color:#ffffff;font-weight:bold;transform:scaleX(0.989);transform-origin:0 0;">KPI Group</div>
<div class="t" style="left:277.05px;top:185.76px;font-size:8.3px;color:#ffffff;font-weight:bold;transform:scaleX(1.004);transform-origin:0 0;">KPI Name</div>
<div class="t" style="left:411.40px;top:185.76px;font-size:8.3px;color:#ffffff;font-weight:bold;transform:scaleX(1.035);transform-origin:0 0;">Unit</div>
<div class="t" style="left:542.25px;top:185.76px;font-size:8.3px;color:#ffffff;font-weight:bold;transform:scaleX(1.017);transform-origin:0 0;">Formula</div>
<div class="t" style="left:782.85px;top:185.76px;font-size:8.3px;color:#ffffff;font-weight:bold;transform:scaleX(1.045);transform-origin:0 0;">Definition</div>
<div class="t" style="left:965.95px;top:185.76px;font-size:8.3px;color:#ffffff;font-weight:bold;transform:scaleX(1.013);transform-origin:0 0;">Type</div>
<div class="t" style="left:58.13px;top:199.62px;font-size:8.3px;color:#333333;transform:scaleX(0.920);transform-origin:0 0;">1</div>
<div class="t s" style="left:133.80px;top:199.62px;font-size:8.3px;color:#333333;transform:scaleX(1.009);transform-origin:0 0;">Availability</div>
<div class="t s" style="left:252.00px;top:199.62px;font-size:8.3px;color:#333333;transform:scaleX(0.910);transform-origin:0 0;">Server Uptime Percentage</div>
<div class="t s" style="left:416.85px;top:199.62px;font-size:8.3px;color:#333333;transform:scaleX(0.786);transform-origin:0 0;">%</div>
<div class="t s" style="left:501.80px;top:199.62px;font-size:8.3px;color:#333333;transform:scaleX(0.961);transform-origin:0 0;">(Total Uptime / Total Time) * 100</div>
<div class="t s" style="left:694.00px;top:199.62px;font-size:8.3px;color:#333333;transform:scaleX(0.947);transform-origin:0 0;">The percentage of time the server is available and operational.</div>
<div class="t s" style="left:968.60px;top:199.62px;font-size:8.3px;color:#333333;transform:scaleX(0.825);transform-origin:0 0;">UTB</div>
<div class="t" style="left:58.13px;top:213.98px;font-size:8.3px;color:#333333;transform:scaleX(0.920);transform-origin:0 0;">2</div>
<div class="t s" style="left:133.80px;top:213.98px;font-size:8.3px;color:#333333;transform:scaleX(1.009);transform-origin:0 0;">Availability</div>
<div class="t s" style="left:258.30px;top:213.98px;font-size:8.3px;color:#333333;transform:scaleX(0.936);transform-origin:0 0;">Downtime Percentage</div>
<div class="t s" style="left:416.85px;top:213.98px;font-size:8.3px;color:#333333;transform:scaleX(0.786);transform-origin:0 0;">%</div>
<div class="t s" style="left:496.40px;top:213.98px;font-size:8.3px;color:#333333;transform:scaleX(0.965);transform-origin:0 0;">(Total Downtime / Total Time) * 100</div>
<div class="t s" style="left:712.00px;top:213.98px;font-size:8.3px;color:#333333;transform:scaleX(0.940);transform-origin:0 0;">The percentage of time the server was not available.</div>
<div class="t s" style="left:969.50px;top:213.98px;font-size:8.3px;color:#333333;transform:scaleX(0.815);transform-origin:0 0;">LTB</div>
<div class="t" style="left:58.13px;top:228.34px;font-size:8.3px;color:#333333;transform:scaleX(0.920);transform-origin:0 0;">3</div>
<div class="t s" style="left:133.80px;top:228.34px;font-size:8.3px;color:#333333;transform:scaleX(1.009);transform-origin:0 0;">Availability</div>
<div class="t s" style="left:233.20px;top:228.34px;font-size:8.3px;color:#333333;transform:scaleX(0.918);transform-origin:0 0;">Mean Time Between Failures (MTBF)</div>
<div class="t s" style="left:409.25px;top:228.34px;font-size:8.3px;color:#333333;transform:scaleX(0.948);transform-origin:0 0;">Hours</div>
<div class="t s" style="left:499.00px;top:228.34px;font-size:8.3px;color:#333333;transform:scaleX(0.966);transform-origin:0 0;">Total Uptime / Number of Failures</div>
<div class="t s" style="left:683.80px;top:228.34px;font-size:8.3px;color:#333333;transform:scaleX(0.954);transform-origin:0 0;">Average time the server remains operational before a failure occurs.</div>
<div class="t s" style="left:968.60px;top:228.34px;font-size:8.3px;color:#333333;transform:scaleX(0.825);transform-origin:0 0;">UTB</div>
<div class="t" style="left:58.13px;top:242.70px;font-size:8.3px;color:#333333;transform:scaleX(0.920);transform-origin:0 0;">4</div>
<div class="t s" style="left:136.00px;top:242.70px;font-size:8.3px;color:#333333;transform:scaleX(0.985);transform-origin:0 0;">Reliability</div>
<div class="t s" style="left:247.80px;top:242.70px;font-size:8.3px;color:#333333;transform:scaleX(0.902);transform-origin:0 0;">Mean Time to Repair (MTTR)</div>
<div class="t s" style="left:405.90px;top:242.70px;font-size:8.3px;color:#333333;transform:scaleX(0.953);transform-origin:0 0;">Minutes</div>
<div class="t s" style="left:493.80px;top:242.70px;font-size:8.3px;color:#333333;transform:scaleX(0.967);transform-origin:0 0;">Total Downtime / Number of Failures</div>
<div class="t s" style="left:689.20px;top:242.70px;font-size:8.3px;color:#333333;transform:scaleX(0.943);transform-origin:0 0;">Average time taken to repair and restore the server after a failure.</div>
<div class="t s" style="left:969.50px;top:242.70px;font-size:8.3px;color:#333333;transform:scaleX(0.815);transform-origin:0 0;">LTB</div>
<div class="t" style="left:58.13px;top:257.06px;font-size:8.3px;color:#333333;transform:scaleX(0.920);transform-origin:0 0;">5</div>
<div class="t s" style="left:136.00px;top:257.06px;font-size:8.3px;color:#333333;transform:scaleX(0.985);transform-origin:0 0;">Reliability</div>
<div class="t s" style="left:276.10px;top:257.06px;font-size:8.3px;color:#333333;transform:scaleX(0.927);transform-origin:0 0;">Failure Rate</div>
<div class="t s" style="left:405.60px;top:257.06px;font-size:8.3px;color:#333333;transform:scaleX(0.959);transform-origin:0 0;">Failures</div>
<div class="t s" style="left:503.30px;top:257.06px;font-size:8.3px;color:#333333;transform:scaleX(0.963);transform-origin:0 0;">Number of Failures / Total Time</div>
<div class="t s" style="left:720.00px;top:257.06px;font-size:8.3px;color:#333333;transform:scaleX(0.970);transform-origin:0 0;">Number of failures occurring in a given period.</div>
<div class="t s" style="left:969.50px;top:257.06px;font-size:8.3px;color:#333333;transform:scaleX(0.815);transform-origin:0 0;">LTB</div>
<div class="t" style="left:58.13px;top:271.42px;font-size:8.3px;color:#333333;transform:scaleX(0.920);transform-origin:0 0;">6</div>
<div class="t s" style="left:130.90px;top:271.42px;font-size:8.3px;color:#333333;transform:scaleX(0.951);transform-origin:0 0;">Performance</div>
<div class="t s" style="left:269.80px;top:271.42px;font-size:8.3px;color:#333333;transform:scaleX(0.933);transform-origin:0 0;">Response Time</div>
<div class="t s" style="left:397.10px;top:271.42px;font-size:8.3px;color:#333333;transform:scaleX(1.002);transform-origin:0 0;">Milliseconds</div>
<div class="t s" style="left:478.20px;top:271.42px;font-size:8.3px;color:#333333;transform:scaleX(0.929);transform-origin:0 0;">Sum of Response Times / Number of Requests</div>
<div class="t s" style="left:720.00px;top:271.42px;font-size:8.3px;color:#333333;transform:scaleX(0.930);transform-origin:0 0;">Average time taken to respond to user requests.</div>
<div class="t s" style="left:969.50px;top:271.42px;font-size:8.3px;color:#333333;transform:scaleX(0.815);transform-origin:0 0;">LTB</div>
<div class="t" style="left:58.13px;top:285.78px;font-size:8.3px;color:#333333;transform:scaleX(0.920);transform-origin:0 0;">7</div>
<div class="t s" style="left:130.90px;top:285.78px;font-size:8.3px;color:#333333;transform:scaleX(0.951);transform-origin:0 0;">Performance</div>
<div class="t s" style="left:283.50px;top:285.78px;font-size:8.3px;color:#333333;transform:scaleX(0.905);transform-origin:0 0;">Latency</div>
<div class="t s" style="left:397.10px;top:285.78px;font-size:8.3px;color:#333333;transform:scaleX(1.002);transform-origin:0 0;">Milliseconds</div>
<div class="t s" style="left:497.90px;top:285.78px;font-size:8.3px;color:#333333;transform:scaleX(0.907);transform-origin:0 0;">Time Taken to Send &amp; Receive Data</div>
<div class="t s" style="left:686.00px;top:285.78px;font-size:8.3px;color:#333333;transform:scaleX(0.959);transform-origin:0 0;">The delay before a transfer of data begins following an instruction.</div>
<div class="t s" style="left:969.50px;top:285.78px;font-size:8.3px;color:#333333;transform:scaleX(0.815);transform-origin:0 0;">LTB</div>
<div class="t" style="left:58.13px;top:300.14px;font-size:8.3px;color:#333333;transform:scaleX(0.920);transform-origin:0 0;">8</div>
<div class="t s" style="left:130.90px;top:300.14px;font-size:8.3px;color:#333333;transform:scaleX(0.951);transform-origin:0 0;">Performance</div>
<div class="t s" style="left:270.00px;top:300.14px;font-size:8.3px;color:#333333;transform:scaleX(0.944);transform-origin:0 0;">CPU Utilization</div>
<div class="t s" style="left:416.85px;top:300.14px;font-size:8.3px;color:#333333;transform:scaleX(0.786);transform-origin:0 0;">%</div>
<div class="t s" style="left:496.20px;top:300.14px;font-size:8.3px;color:#333333;transform:scaleX(0.925);transform-origin:0 0;">(CPU Usage Time / Total Time) * 100</div>
<div class="t s" style="left:708.80px;top:300.14px;font-size:8.3px;color:#333333;transform:scaleX(0.914);transform-origin:0 0;">Percentage of CPU resources being used by the server.</div>
<div class="t s" style="left:969.50px;top:300.14px;font-size:8.3px;color:#333333;transform:scaleX(0.815);transform-origin:0 0;">LTB</div>
<div class="t" style="left:58.13px;top:314.50px;font-size:8.3px;color:#333333;transform:scaleX(0.920);transform-origin:0 0;">9</div>
<div class="t s" style="left:130.90px;top:314.50px;font-size:8.3px;color:#333333;transform:scaleX(0.951);transform-origin:0 0;">Performance</div>
<div class="t s" style="left:263.60px;top:314.50px;font-size:8.3px;color:#333333;transform:scaleX(0.967);transform-origin:0 0;">Memory Utilization</div>
<div class="t s" style="left:416.85px;top:314.50px;font-size:8.3px;color:#333333;transform:scaleX(0.786);transform-origin:0 0;">%</div>
<div class="t s" style="left:494.70px;top:314.50px;font-size:8.3px;color:#333333;transform:scaleX(0.946);transform-origin:0 0;">(Memory Used / Total Memory) * 100</div>
<div class="t s" style="left:731.60px;top:314.50px;font-size:8.3px;color:#333333;transform:scaleX(0.921);transform-origin:0 0;">Percentage of server memory being used.</div>
<div class="t s" style="left:969.50px;top:314.50px;font-size:8.3px;color:#333333;transform:scaleX(0.815);transform-origin:0 0;">LTB</div>
<div class="t" style="left:56.00px;top:328.86px;font-size:8.3px;color:#333333;transform:scaleX(0.920);transform-origin:0 0;">10</div>
<div class="t s" style="left:130.90px;top:328.86px;font-size:8.3px;color:#333333;transform:scaleX(0.951);transform-origin:0 0;">Performance</div>
<div class="t s" style="left:268.60px;top:328.86px;font-size:8.3px;color:#333333;transform:scaleX(0.950);transform-origin:0 0;">Network Uptime</div>
<div class="t s" style="left:416.85px;top:328.86px;font-size:8.3px;color:#333333;transform:scaleX(0.786);transform-origin:0 0;">%</div>
<div class="t s" style="left:483.00px;top:328.86px;font-size:8.3px;color:#333333;transform:scaleX(0.959);transform-origin:0 0;">(Network Available Time / Total Time) * 100</div>
<div class="t s" style="left:708.00px;top:328.86px;font-size:8.3px;color:#333333;transform:scaleX(0.943);transform-origin:0 0;">Percentage of time the network connection was active.</div>
<div class="t s" style="left:968.60px;top:328.86px;font-size:8.3px;color:#333333;transform:scaleX(0.825);transform-origin:0 0;">UTB</div>
<div class="t" style="left:56.29px;top:343.22px;font-size:8.3px;color:#333333;transform:scaleX(0.920);transform-origin:0 0;">11</div>
<div class="t s" style="left:114.00px;top:343.22px;font-size:8.3px;color:#333333;transform:scaleX(0.941);transform-origin:0 0;">Security &amp; Compliance</div>
<div class="t s" style="left:245.70px;top:343.22px;font-size:8.3px;color:#333333;transform:scaleX(0.951);transform-origin:0 0;">Number of Security Incidents</div>
<div class="t s" style="left:409.05px;top:343.22px;font-size:8.3px;color:#333333;transform:scaleX(0.966);transform-origin:0 0;">Count</div>
<div class="t s" style="left:517.80px;top:343.22px;font-size:8.3px;color:#333333;transform:scaleX(0.939);transform-origin:0 0;">Total Security Breaches</div>
<div class="t s" style="left:710.70px;top:343.22px;font-size:8.3px;color:#333333;transform:scaleX(0.945);transform-origin:0 0;">The number of security incidents affecting the server.</div>
<div class="t s" style="left:969.50px;top:343.22px;font-size:8.3px;color:#333333;transform:scaleX(0.815);transform-origin:0 0;">LTB</div>
<div class="t" style="left:56.00px;top:357.58px;font-size:8.3px;color:#333333;transform:scaleX(0.920);transform-origin:0 0;">12</div>
<div class="t s" style="left:114.00px;top:357.58px;font-size:8.3px;color:#333333;transform:scaleX(0.941);transform-origin:0 0;">Security &amp; Compliance</div>
<div class="t s" style="left:255.70px;top:357.58px;font-size:8.3px;color:#333333;transform:scaleX(0.932);transform-origin:0 0;">Patch Compliance Rate</div>
<div class="t s" style="left:416.85px;top:357.58px;font-size:8.3px;color:#333333;transform:scaleX(0.786);transform-origin:0 0;">%</div>
<div class="t s" style="left:492.20px;top:357.58px;font-size:8.3px;color:#333333;transform:scaleX(0.926);transform-origin:0 0;">(Patched Servers / Total Servers) * 100</div>
<div class="t s" style="left:701.30px;top:357.58px;font-size:8.3px;color:#333333;transform:scaleX(0.939);transform-origin:0 0;">The percentage of servers updated with the latest patches.</div>
<div class="t s" style="left:968.60px;top:357.58px;font-size:8.3px;color:#333333;transform:scaleX(0.825);transform-origin:0 0;">UTB</div>
<div class="t" style="left:56.00px;top:371.94px;font-size:8.3px;color:#333333;transform:scaleX(0.920);transform-origin:0 0;">13</div>
<div class="t s" style="left:114.00px;top:371.94px;font-size:8.3px;color:#333333;transform:scaleX(0.941);transform-origin:0 0;">Security &amp; Compliance</div>
<div class="t s" style="left:242.70px;top:371.94px;font-size:8.3px;color:#333333;transform:scaleX(0.953);transform-origin:0 0;">Unauthorized Access Attempts</div>
<div class="t s" style="left:409.05px;top:371.94px;font-size:8.3px;color:#333333;transform:scaleX(0.966);transform-origin:0 0;">Count</div>
<div class="t s" style="left:498.70px;top:371.94px;font-size:8.3px;color:#333333;transform:scaleX(0.950);transform-origin:0 0;">Total Unauthorized Login Attempts</div>
<div class="t s" style="left:709.30px;top:371.94px;font-size:8.3px;color:#333333;transform:scaleX(0.959);transform-origin:0 0;">The number of unauthorized login attempts detected.</div>
<div class="t s" style="left:969.50px;top:371.94px;font-size:8.3px;color:#333333;transform:scaleX(0.815);transform-origin:0 0;">LTB</div>
</body></html>
